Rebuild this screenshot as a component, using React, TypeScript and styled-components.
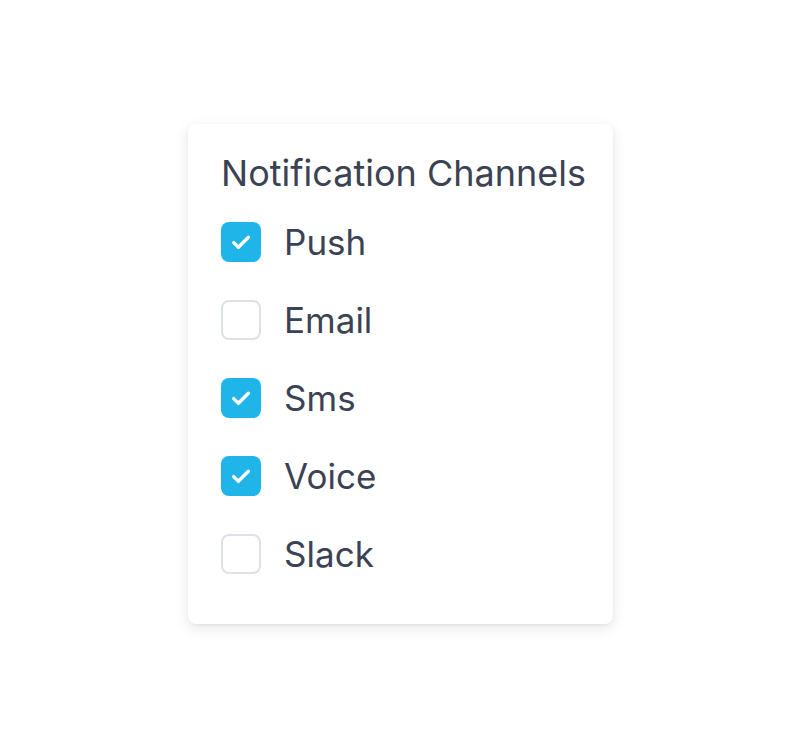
import styled, { createGlobalStyle } from 'styled-components';
import { useState } from 'react';

const GlobalStyle = createGlobalStyle`
  html, body {
    margin: 0;
    padding: 0;
    background: #ffffff;
  }
  body {
    font-family: Inter, "Noto Sans", sans-serif;
    color: #3b4254;
  }
`;

const Page = styled.div`
  min-height: 100vh;
  display: flex;
  align-items: center;
  justify-content: center;
  padding-left: 3px;
  box-sizing: border-box;
`;

const Card = styled.div`
  background: #ffffff;
  border-radius: 8px;
  box-shadow: 0 4px 14px rgba(0, 0, 0, 0.1), 0 1px 3px rgba(0, 0, 0, 0.05);
  padding: 27px 27px 50px 33px;
`;

const Title = styled.h3`
  margin: 0 0 27px;
  font-size: 36px;
  font-weight: 400;
  line-height: 44px;
  color: #3b4254;
  white-space: nowrap;
`;

const List = styled.div`
  display: flex;
  flex-direction: column;
  gap: 38px;
`;

const Row = styled.label`
  display: flex;
  align-items: center;
  gap: 23px;
  cursor: pointer;
  font-size: 35px;
  line-height: 40px;
`;

const Box = styled.span<{ checked: boolean }>`
  width: 40px;
  height: 40px;
  box-sizing: border-box;
  border-radius: 8px;
  display: inline-flex;
  align-items: center;
  justify-content: center;
  background: ${(p) => (p.checked ? '#1fb5e8' : '#ffffff')};
  border: ${(p) => (p.checked ? 'none' : '2px solid #dfe1e8')};
  flex-shrink: 0;
`;

const channels = ['Push', 'Email', 'Sms', 'Voice', 'Slack'];

export default function App() {
  const [selected, setSelected] = useState<Record<string, boolean>>({
    Push: true,
    Sms: true,
    Voice: true,
  });

  return (
    <>
      <GlobalStyle />
      <Page>
        <Card>
          <Title>Notification Channels</Title>
          <List>
            {channels.map((c) => (
              <Row key={c} onClick={() => setSelected((s) => ({ ...s, [c]: !s[c] }))}>
                <Box checked={!!selected[c]}>
                  {selected[c] && (
                    <svg width="32" height="32" viewBox="0 0 20 20" fill="none">
                      <path
                        d="M5.4 10.4l3 2.9 6.2-6.3"
                        stroke="#ffffff"
                        strokeWidth="2.1"
                        strokeLinecap="round"
                        strokeLinejoin="round"
                      />
                    </svg>
                  )}
                </Box>
                {c}
              </Row>
            ))}
          </List>
        </Card>
      </Page>
    </>
  );
}
